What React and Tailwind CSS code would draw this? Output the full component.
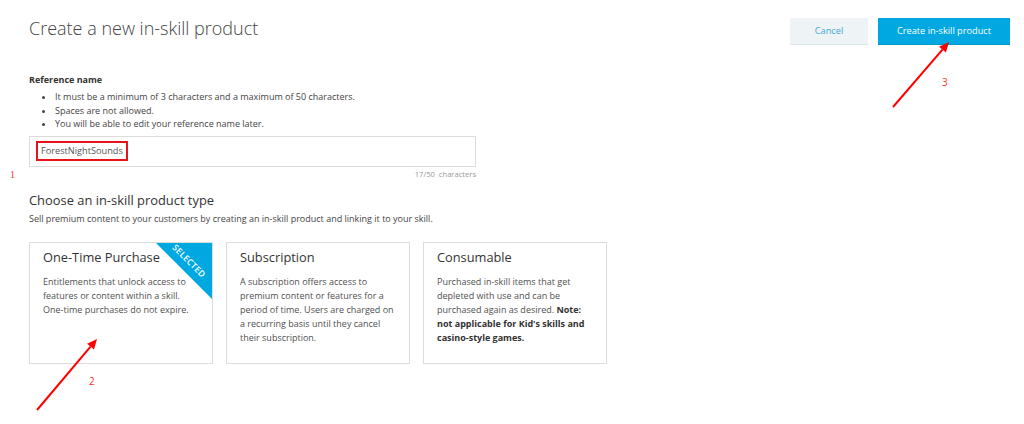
import React from "react";

function Arrow({ x1, y1, x2, y2 }) {
  const ang = Math.atan2(y2 - y1, x2 - x1);
  const L = 10, W = 4.5;
  const bx = x2 - L * Math.cos(ang), by = y2 - L * Math.sin(ang);
  const px = -Math.sin(ang) * W, py = Math.cos(ang) * W;
  return (
    <g>
      <line x1={x1} y1={y1} x2={bx} y2={by} stroke="#ff0000" strokeWidth="2" />
      <polygon points={`${x2},${y2} ${bx + px},${by + py} ${bx - px},${by - py}`} fill="#ff0000" />
    </g>
  );
}

function Card({ title, children, selected }) {
  return (
    <div className="relative w-[184px] h-[122px] border border-[#dcdcdc] bg-white px-[13px] pt-[4px] overflow-hidden">
      <div className="text-[12.8px] text-[#333] leading-[20px] font-normal">{title}</div>
      <div className="mt-[8px] text-[9px] leading-[14px] text-[#505050]">{children}</div>
      {selected && (
        <div className="absolute top-0 right-0 w-[56px] h-[56px] overflow-hidden">
          <div className="absolute top-0 right-0 w-0 h-0 border-t-[56px] border-l-[56px] border-t-[#00a8e1] border-l-transparent" />
          <div className="absolute top-[13px] right-[-13px] w-[72px] rotate-45 text-center text-white text-[8.6px] leading-[10px] tracking-[0.3px] font-semibold">SELECTED</div>
        </div>
      )}
    </div>
  );
}

export default function App() {
  return (
    <div className="relative w-[1024px] h-[424px] bg-white overflow-hidden" style={{ fontFamily: '"Open Sans", "Noto Sans", sans-serif' }}>
      <div className="flex items-start justify-between pl-[29px] pr-[14px] pt-[18px]">
        <h1 className="text-[18px] font-light text-[#444] leading-[24px] mt-[-2px]">Create a new in-skill product</h1>
        <div className="flex gap-[10px]">
          <button className="w-[78px] h-[27px] bg-[#eef3f5] border-b border-[#dde6ea] text-[#3fa9d8] text-[9.2px]">Cancel</button>
          <button className="w-[132px] h-[27px] bg-[#00a8e1] border-b border-[#0896c6] text-white text-[9.2px]">Create in-skill product</button>
        </div>
      </div>

      <div className="pl-[29px] mt-[28px]">
        <div className="text-[9px] font-bold text-[#333] leading-[14px]">Reference name</div>
        <ul className="list-disc pl-[26px] mt-[3px] text-[9px] text-[#444] leading-[13.5px]">
          <li>It must be a minimum of 3 characters and a maximum of 50 characters.</li>
          <li>Spaces are not allowed.</li>
          <li>You will be able to edit your reference name later.</li>
        </ul>
        <div className="mt-[5px] w-[447px] h-[31px] border border-[#dcdcdc] flex items-center pl-[6px]">
          <span className="border-2 border-[#e8121b] px-[3px] h-[20px] flex items-center text-[9.2px] text-[#555]">ForestNightSounds</span>
        </div>
        <div className="w-[447px] text-right text-[7.6px] text-[#999] leading-[12px] mt-[1px]">17/50&nbsp; characters</div>
        <div className="mt-[11px] text-[12.9px] text-[#333] leading-[18px]">Choose an in-skill product type</div>
        <div className="mt-[3px] text-[9px] text-[#444] leading-[14px]">Sell premium content to your customers by creating an in-skill product and linking it to your skill.</div>
        <div className="mt-[16px] flex gap-[13px]">
          <Card title="One-Time Purchase" selected>
            Entitlements that unlock access to features or content within a skill. One-time purchases do not expire.
          </Card>
          <Card title="Subscription">
            A subscription offers access to premium content or features for a period of time. Users are charged on a recurring basis until they cancel their subscription.
          </Card>
          <Card title="Consumable">
            Purchased in-skill items that get depleted with use and can be purchased again as desired. <b className="text-[#333]">Note: not applicable for Kid's skills and casino-style games.</b>
          </Card>
        </div>
      </div>

      <svg className="absolute inset-0 pointer-events-none" width="1024" height="424">
        <Arrow x1={37} y1={410} x2={97} y2={339} />
        <Arrow x1={893} y1={107} x2={949} y2={42} />
      </svg>
      <div className="absolute left-[10px] top-[167px] text-[10px] text-[#ff3030]" style={{ fontFamily: '"Liberation Serif", serif' }}>1</div>
      <div className="absolute left-[89px] top-[374px] text-[10px] text-[#ff3030]">2</div>
      <div className="absolute left-[942px] top-[75px] text-[10px] text-[#ff3030]">3</div>
    </div>
  );
}
